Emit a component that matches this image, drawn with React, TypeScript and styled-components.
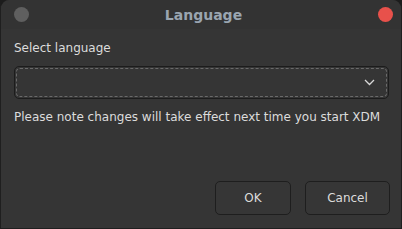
import styled, { createGlobalStyle } from "styled-components";

const Global = createGlobalStyle`
  html, body {
    margin: 0;
    padding: 0;
    background: #1c1c1c;
  }
  * { box-sizing: border-box; }
`;

const Window = styled.div`
  width: 402px;
  height: 229px;
  display: flex;
  flex-direction: column;
  background: #353535;
  border: 1px solid #1f1f1f;
  border-top: none;
  border-radius: 9px 9px 0 0;
  font-family: "DejaVu Sans", sans-serif;
  color: #dcdcdc;
  overflow: hidden;
`;

const TitleBar = styled.div`
  height: 29px;
  display: flex;
  align-items: center;
  justify-content: space-between;
  padding: 0 8px 0 13px;
  background: #333333;
`;

const Dot = styled.span<{ $color: string }>`
  width: 15px;
  height: 15px;
  border-radius: 50%;
  background: ${(p) => p.$color};
`;

const Title = styled.div`
  font-weight: bold;
  font-size: 14px;
  color: #9aa5b0;
`;

const Body = styled.div`
  flex: 1;
  display: flex;
  flex-direction: column;
  padding: 11px 11px 13px 13px;
`;

const Label = styled.div`
  font-size: 12px;
  line-height: 16px;
`;

const Combo = styled.div`
  margin-top: 10px;
  width: 375px;
  height: 33px;
  border: 1px solid #1c1c1c;
  border-radius: 5px;
  padding: 1px;
  display: flex;
`;

const ComboInner = styled.div`
  flex: 1;
  border: 1px dashed #6a6a6a;
  border-radius: 4px;
  display: flex;
  align-items: center;
  justify-content: flex-end;
  padding-right: 11px;
`;

const Note = styled.div`
  margin-top: 10px;
  font-size: 12px;
  line-height: 16px;
  white-space: nowrap;
`;

const Actions = styled.div`
  margin-top: auto;
  display: flex;
  justify-content: flex-end;
  gap: 14px;
`;

const Button = styled.button<{ $w: number }>`
  width: ${(p) => p.$w}px;
  height: 34px;
  background: #363636;
  border: 1px solid #1e1e1e;
  border-radius: 5px;
  color: #dcdcdc;
  font-family: "DejaVu Sans", sans-serif;
  font-size: 12px;
`;

export default function App() {
  return (
    <>
      <Global />
      <Window>
        <TitleBar>
          <Dot $color="#5f5f5f" />
          <Title>Language</Title>
          <Dot $color="#e8514b" />
        </TitleBar>
        <Body>
          <Label>Select language</Label>
          <Combo>
            <ComboInner>
              <svg width="11" height="7" viewBox="0 0 11 7">
                <path d="M1 1 L5.5 5.5 L10 1" fill="none" stroke="#d8d8d8" strokeWidth="1.3" />
              </svg>
            </ComboInner>
          </Combo>
          <Note>Please note changes will take effect next time you start XDM</Note>
          <Actions>
            <Button $w={76}>OK</Button>
            <Button $w={85}>Cancel</Button>
          </Actions>
        </Body>
      </Window>
    </>
  );
}
